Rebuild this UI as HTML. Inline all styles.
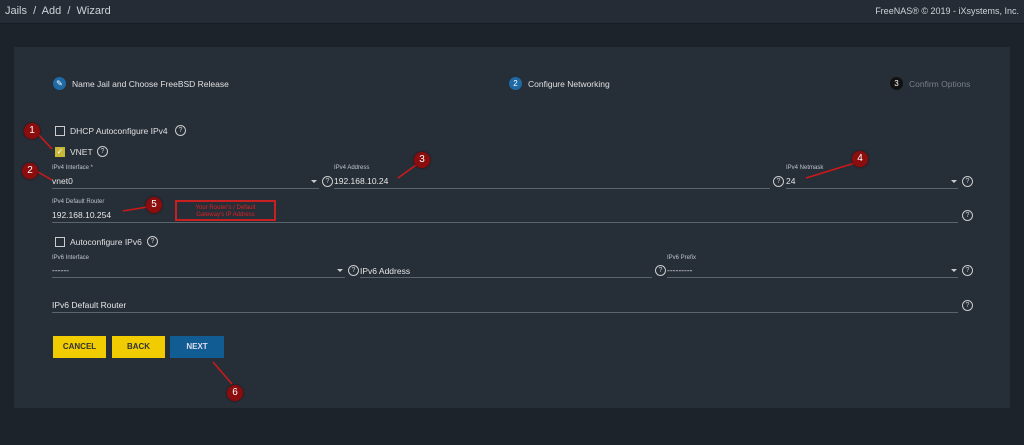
<!DOCTYPE html><html><head><style>
body{margin:0;width:1024px;height:445px;background:#1d232b;font-family:"Liberation Sans",sans-serif;color:#e0e0e0;position:relative;overflow:hidden;font-size:9px}
.a{position:absolute}
.hdr{left:0;top:0;width:1024px;height:23px;background:#252c35;border-bottom:1px solid #161b21}
.card{left:14px;top:47px;width:996px;height:361px;background:#262e38}
.line{height:1px;background:#5b636d}
.lbl{font-size:6px;color:#bfc4ca}
.val{font-size:8.5px;color:#e6e6e6}
.t{font-size:8.5px}
.q{width:9px;height:9px;border:1px solid #ccc;border-radius:50%;font-size:7px;line-height:9px;text-align:center;color:#ccc}
.cb{width:8px;height:8px;border:1px solid #ccc}
.btn{height:22px;font-size:8px;line-height:22px;text-align:center;font-weight:bold}
.dd{width:0;height:0;border-left:3px solid transparent;border-right:3px solid transparent;border-top:3px solid #ccc}
.n{width:16px;height:16px;border-radius:50%;background:#8b0d0d;color:#fff;font-size:10px;line-height:16px;text-align:center;box-shadow:0 0 2px #400}
.st{width:13px;height:13px;border-radius:50%;font-size:8px;line-height:13px;text-align:center;color:#fff}
</style></head><body>
<div class="a hdr"></div>
<div class="a" style="left:5px;top:5px;font-size:11px;color:#cfd3d8">Jails &nbsp;/&nbsp; Add &nbsp;/&nbsp; Wizard</div>
<div class="a" style="right:5px;top:6px;font-size:9px;color:#cfd3d8">FreeNAS® © 2019 - iXsystems, Inc.</div>
<div class="a card"></div>
<div class="a st" style="left:53px;top:77px;background:#1f6aa5">✎</div>
<div class="a t" style="left:72px;top:79px">Name Jail and Choose FreeBSD Release</div>
<div class="a st" style="left:509px;top:77px;background:#1f6aa5">2</div>
<div class="a t" style="left:528px;top:79px">Configure Networking</div>
<div class="a st" style="left:890px;top:77px;background:#111">3</div>
<div class="a t" style="left:909px;top:79px;color:#7a8089">Confirm Options</div>

<div class="a cb" style="left:55px;top:126px"></div>
<div class="a t" style="left:70px;top:126px">DHCP Autoconfigure IPv4</div>
<div class="a q" style="left:175px;top:125px">?</div>
<div class="a cb" style="left:55px;top:147px;background:#c8b83a;border-color:#c8b83a;color:#fff;font-size:8px;line-height:8px;text-align:center">✓</div>
<div class="a t" style="left:70px;top:147px">VNET</div>
<div class="a q" style="left:97px;top:146px">?</div>

<div class="a lbl" style="left:52px;top:165px">IPv4 Interface *</div>
<div class="a val" style="left:52px;top:176px">vnet0</div>
<div class="a dd" style="left:311px;top:180px"></div>
<div class="a line" style="left:52px;top:188px;width:267px"></div>
<div class="a q" style="left:322px;top:176px">?</div>
<div class="a lbl" style="left:334px;top:165px">IPv4 Address</div>
<div class="a val" style="left:334px;top:176px">192.168.10.24</div>
<div class="a line" style="left:334px;top:188px;width:436px"></div>
<div class="a q" style="left:773px;top:176px">?</div>
<div class="a lbl" style="left:786px;top:165px">IPv4 Netmask</div>
<div class="a val" style="left:786px;top:176px">24</div>
<div class="a dd" style="left:951px;top:180px"></div>
<div class="a line" style="left:786px;top:188px;width:172px"></div>
<div class="a q" style="left:962px;top:176px">?</div>

<div class="a lbl" style="left:52px;top:199px">IPv4 Default Router</div>
<div class="a val" style="left:52px;top:210px">192.168.10.254</div>
<div class="a line" style="left:52px;top:222px;width:906px"></div>
<div class="a q" style="left:962px;top:210px">?</div>
<div class="a" style="left:175px;top:200px;width:101px;height:21px;border:2px solid #c82020;color:#d22;font-size:6px;text-align:center;line-height:7px;padding-top:3px;box-sizing:border-box">Your Router's / Default<br>Gateway's IP Address</div>

<div class="a cb" style="left:55px;top:237px"></div>
<div class="a t" style="left:70px;top:237px">Autoconfigure IPv6</div>
<div class="a q" style="left:147px;top:236px">?</div>

<div class="a lbl" style="left:52px;top:255px">IPv6 Interface</div>
<div class="a val" style="left:52px;top:265px">------</div>
<div class="a dd" style="left:337px;top:269px"></div>
<div class="a line" style="left:52px;top:277px;width:293px"></div>
<div class="a q" style="left:348px;top:265px">?</div>
<div class="a val" style="left:360px;top:266px">IPv6 Address</div>
<div class="a line" style="left:360px;top:277px;width:292px"></div>
<div class="a q" style="left:655px;top:265px">?</div>
<div class="a lbl" style="left:667px;top:255px">IPv6 Prefix</div>
<div class="a val" style="left:667px;top:265px">---------</div>
<div class="a dd" style="left:951px;top:269px"></div>
<div class="a line" style="left:667px;top:277px;width:291px"></div>
<div class="a q" style="left:962px;top:265px">?</div>

<div class="a val" style="left:52px;top:300px">IPv6 Default Router</div>
<div class="a line" style="left:52px;top:312px;width:906px"></div>
<div class="a q" style="left:962px;top:300px">?</div>

<div class="a btn" style="left:53px;top:336px;width:53px;background:#f0cc00;color:#333">CANCEL</div>
<div class="a btn" style="left:112px;top:336px;width:53px;background:#f0cc00;color:#333">BACK</div>
<div class="a btn" style="left:170px;top:336px;width:54px;background:#115c92;color:#dde">NEXT</div>

<svg class="a" style="left:0;top:0" width="1024" height="445">
<g stroke="#d01818" stroke-width="1.5" fill="#d01818">
<line x1="39" y1="135" x2="52" y2="149"/><line x1="38" y1="172" x2="52" y2="180"/>
<line x1="416" y1="165" x2="398" y2="178"/><line x1="855" y1="163" x2="806" y2="178"/>
<line x1="147" y1="207" x2="123" y2="211"/><line x1="232" y1="384" x2="213" y2="362"/>
</g></svg>
<div class="a n" style="left:24px;top:123px">1</div>
<div class="a n" style="left:22px;top:163px">2</div>
<div class="a n" style="left:414px;top:152px">3</div>
<div class="a n" style="left:852px;top:151px">4</div>
<div class="a n" style="left:146px;top:197px">5</div>
<div class="a n" style="left:227px;top:385px">6</div>
</body></html>
